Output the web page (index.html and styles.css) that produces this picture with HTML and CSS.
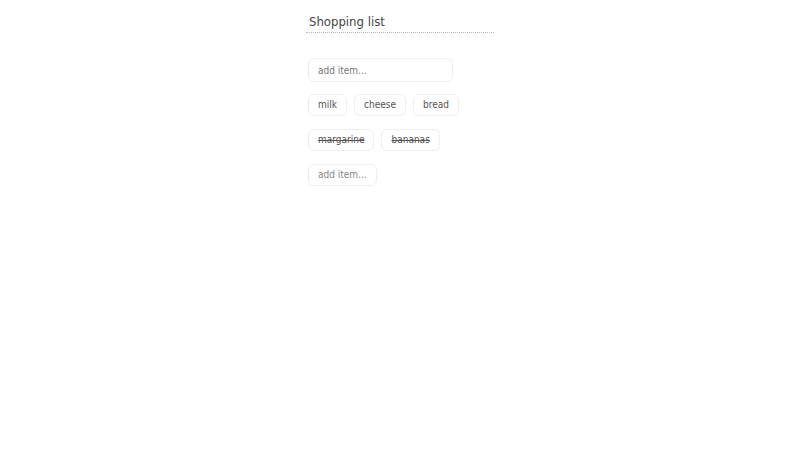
FILE: index.html
```html
<!DOCTYPE html>
<html lang="en">
<head>
    <meta charset="UTF-8">
    <meta name="viewport" content="width=device-width, initial-scale=1.0">
    <title>Shopping list</title>
    <link rel="stylesheet" href="styles.css">
</head>
<body>
    <div class="list">
        <h1 class="list-title">Shopping list</h1>

        <input class="new-item" type="text" placeholder="add item...">

        <div class="items">
            <span class="item">milk</span>
            <span class="item">cheese</span>
            <span class="item">bread</span>
        </div>

        <div class="items">
            <span class="item done">margarine</span>
            <span class="item done">bananas</span>
        </div>

        <div class="items">
            <span class="item placeholder">add item...</span>
        </div>
    </div>
</body>
</html>
```

FILE: styles.css
```css
body {
    margin: 0;
    font-family: "DejaVu Sans Condensed", "DejaVu Sans", sans-serif;
    font-stretch: condensed;
    color: #555;
    background-color: #fff;
}

.list {
    width: 188px;
    margin: 0 auto;
    padding-top: 12px;
}

.list-title {
    margin: 0;
    padding: 1px 3px 1px;
    font-size: 13px;
    font-weight: normal;
    line-height: 18px;
    color: #444;
    border-bottom: 1px dotted #bbb;
}

.new-item {
    display: block;
    box-sizing: border-box;
    width: 145px;
    height: 24px;
    margin: 25px 0 12px 2px;
    padding: 0 9px;
    font-family: inherit;
    font-stretch: condensed;
    font-size: 10px;
    color: #555;
    border: 1px solid #eee;
    border-radius: 6px;
    outline: none;
}

.new-item::placeholder {
    color: #777;
}

.items {
    display: flex;
    gap: 7px;
    margin: 0 0 13px 2px;
}

.item {
    box-sizing: border-box;
    height: 22px;
    padding: 0 9px;
    font-size: 10px;
    line-height: 20px;
    border: 1px solid #eee;
    border-radius: 6px;
}

.done {
    text-decoration: line-through;
}

.placeholder {
    color: #888;
}
```
